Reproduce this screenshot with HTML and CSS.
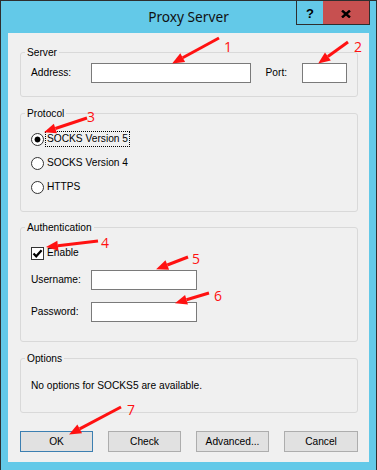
FILE: index.html
```html
<!DOCTYPE html>
<html lang="en">
<head>
    <meta charset="utf-8">
    <title>Proxy Server</title>
    <link rel="stylesheet" href="styles.css">
</head>
<body>
    <div class="window">
        <div class="titlebar">
            <div></div>
            <div class="title">Proxy Server</div>
            <div class="controls">
                <div class="btn-help">?</div>
                <div class="btn-close">
                    <svg width="10" height="8" viewBox="0 0 10 8">
                        <path d="M1 0.5 L9 7.5 M9 0.5 L1 7.5" stroke="#000" stroke-width="2.4" fill="none"/>
                    </svg>
                </div>
            </div>
        </div>

        <div class="client">
            <fieldset class="grp grp-server">
                <legend>Server</legend>
                <div class="row">
                    <span class="lbl">Address:</span>
                    <div class="edit edit-address"></div>
                    <span class="lbl-port">Port:</span>
                    <div class="edit edit-port"></div>
                </div>
            </fieldset>

            <fieldset class="grp grp-protocol">
                <legend>Protocol</legend>
                <div class="opt"><span class="radio checked"></span><span class="cap focus">SOCKS Version 5</span></div>
                <div class="opt"><span class="radio"></span><span class="cap">SOCKS Version 4</span></div>
                <div class="opt"><span class="radio"></span><span class="cap">HTTPS</span></div>
            </fieldset>

            <fieldset class="grp grp-auth">
                <legend>Authentication</legend>
                <div class="chk-row">
                    <span class="chk">
                        <svg width="11" height="11" viewBox="0 0 11 11">
                            <path d="M1.5 5.5 L4.2 8.3 L9.6 2.2" stroke="#000" stroke-width="2.2" fill="none"/>
                        </svg>
                    </span>
                    <span>Enable</span>
                </div>
                <div class="row row-user">
                    <span class="lbl">Username:</span>
                    <div class="edit edit-auth"></div>
                </div>
                <div class="row row-pass">
                    <span class="lbl">Password:</span>
                    <div class="edit edit-auth"></div>
                </div>
            </fieldset>

            <fieldset class="grp grp-options">
                <legend>Options</legend>
                <div class="note">No options for SOCKS5 are available.</div>
            </fieldset>

            <div class="buttons">
                <div class="btn btn-default">OK</div>
                <div class="btn">Check</div>
                <div class="btn">Advanced...</div>
                <div class="btn btn-cancel">Cancel</div>
            </div>
        </div>

        <!-- red callouts drawn on top of the screenshot -->
        <svg class="marks" width="377" height="470" viewBox="0 0 377 470">
            <defs>
                <marker id="head" markerUnits="userSpaceOnUse" markerWidth="12" markerHeight="10" refX="0" refY="5" orient="auto" overflow="visible">
                    <path d="M0 0 L12 5 L0 10 z" fill="#f11"/>
                </marker>
            </defs>
            <g class="arrows">
                <line x1="219" y1="38" x2="182.7" y2="57.7" marker-end="url(#head)"/>
                <line x1="348" y1="42" x2="327.9" y2="56.5" marker-end="url(#head)"/>
                <line x1="87" y1="118" x2="55.4" y2="128.5" marker-end="url(#head)"/>
                <line x1="98" y1="241" x2="57.9" y2="245.7" marker-end="url(#head)"/>
                <line x1="188" y1="257" x2="167.3" y2="265" marker-end="url(#head)"/>
                <line x1="209" y1="293" x2="186.5" y2="299.8" marker-end="url(#head)"/>
                <line x1="121" y1="407" x2="79.7" y2="428.9" marker-end="url(#head)"/>
            </g>
            <text class="num" x="224" y="52">1</text>
            <text class="num" x="354" y="52">2</text>
            <text class="num" x="87" y="122">3</text>
            <text class="num" x="101" y="248">4</text>
            <text class="num" x="192" y="264">5</text>
            <text class="num" x="214" y="301">6</text>
            <text class="num" x="127" y="415">7</text>
        </svg>
    </div>
</body>
</html>
```

FILE: styles.css
```css
body {
    margin: 0;
    background: #fff;
}

.window {
    position: relative;
    width: 377px;
    height: 470px;
    box-sizing: border-box;
    border: 1px solid #2e2e2e;
    border-bottom: 0;
    padding: 0 7px;
    background: #63c9e8;
    font-family: "Liberation Sans", Arial, sans-serif;
    font-size: 10.2px;
    line-height: 14px;
    color: #000;
}

/* title bar */
.titlebar {
    height: 32px;
    display: grid;
    grid-template-columns: 1fr auto 1fr;
}

.title {
    font-family: "Noto Sans", sans-serif;
    font-size: 13.7px;
    line-height: 32px;
    color: #111;
}

.controls {
    justify-self: end;
    display: flex;
    height: 24px;
    margin-right: -1px;
}

.btn-help {
    width: 27px;
    box-sizing: border-box;
    padding-top: 3px;
    border-left: 1px solid #2e2e2e;
    border-bottom: 1px solid #2e2e2e;
    text-align: center;
    font-weight: bold;
    font-size: 13px;
    line-height: 19px;
}

.btn-close {
    width: 47px;
    box-sizing: border-box;
    padding-top: 2px;
    border-right: 1px solid #2e2e2e;
    border-bottom: 1px solid #2e2e2e;
    background: #c75050;
    display: flex;
    align-items: center;
    justify-content: center;
}

/* client area */
.client {
    height: 429px;
    box-sizing: border-box;
    padding: 12px 11px 0 12px;
    background: #f0f0f0;
}

.grp {
    margin: 0;
    padding: 0 10px;
    min-width: 0;
    border: 1px solid #d9d9d9;
    border-radius: 3px;
}

.grp legend {
    margin-left: -6px;
    padding: 0 2px;
    line-height: 15px;
}

.grp-server {
    padding-top: 3px;
    padding-bottom: 13px;
}

.grp-protocol {
    margin-top: 9px;
    padding-top: 6px;
    padding-bottom: 12px;
}

.grp-auth {
    margin-top: 8px;
    padding-top: 8px;
    padding-bottom: 19px;
}

.grp-options {
    margin-top: 9px;
    padding-top: 13px;
    padding-bottom: 19px;
}

.row {
    display: flex;
    align-items: center;
    height: 20px;
}

.lbl {
    width: 60px;
}

.lbl-port {
    width: 37px;
    margin-left: 15px;
}

.edit {
    height: 20px;
    box-sizing: border-box;
    border: 1px solid #7a7a7a;
    background: #fff;
}

.edit-address {
    width: 161px;
}

.edit-port {
    width: 45px;
}

.edit-auth {
    width: 106px;
}

.opt {
    display: flex;
    align-items: center;
    height: 24px;
}

.radio {
    width: 13px;
    height: 13px;
    box-sizing: border-box;
    margin-right: 1px;
    border: 1px solid #333;
    border-radius: 50%;
    background: #fff;
}

.radio.checked {
    background: radial-gradient(circle, #000 2.6px, #fff 3.3px);
}

.cap {
    padding: 0 1px;
    border: 1px dotted transparent;
}

.cap.focus {
    border-color: #000;
}

.chk-row {
    display: flex;
    align-items: center;
    height: 20px;
}

.chk {
    width: 13px;
    height: 13px;
    box-sizing: border-box;
    margin-right: 3px;
    border: 1px solid #333;
    background: #fff;
    display: flex;
}

.row-user {
    margin-top: 7px;
}

.row-pass {
    margin-top: 12px;
}

.note {
    line-height: 14px;
}

/* dialog buttons */
.buttons {
    display: flex;
    justify-content: space-between;
    margin-top: 18px;
}

.btn {
    width: 73px;
    height: 21px;
    box-sizing: border-box;
    border: 1px solid #adadad;
    background: #e1e1e1;
    text-align: center;
    line-height: 19px;
}

.btn-default {
    border-color: #3c7fb1;
}

.btn-cancel {
    width: 74px;
}

/* annotations */
.marks {
    position: absolute;
    left: -1px;
    top: -1px;
    pointer-events: none;
}

.arrows line {
    stroke: #f11;
    stroke-width: 3;
}

.num {
    fill: #f11;
    font-family: "Open Sans", sans-serif;
    font-size: 14px;
}
```
